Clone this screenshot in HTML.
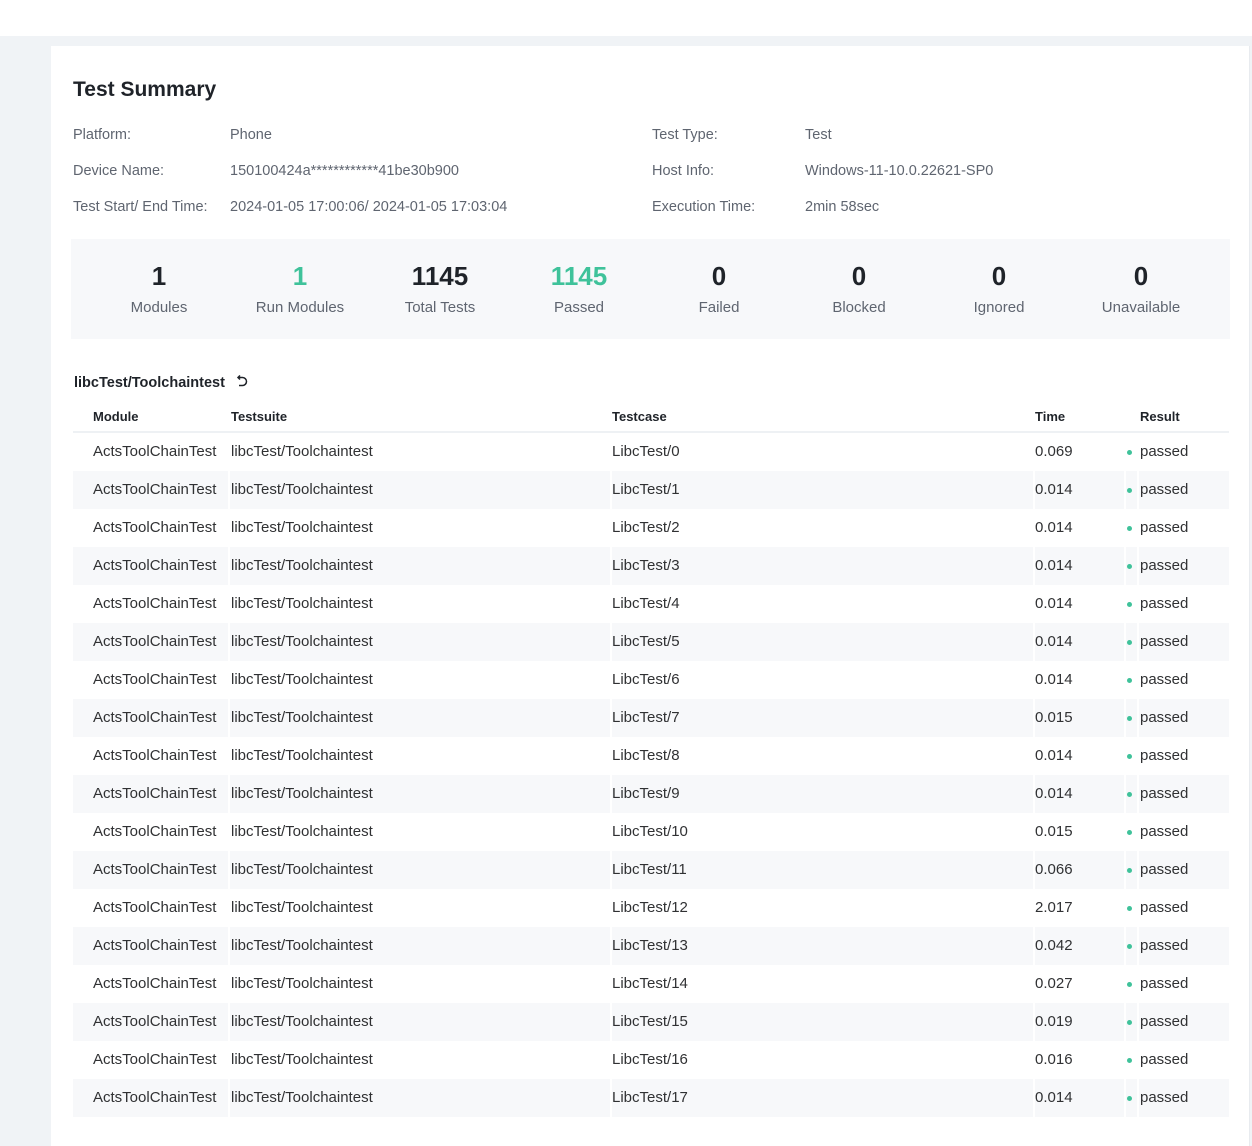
<!DOCTYPE html>
<html><head><meta charset="utf-8"><style>
*{margin:0;padding:0;box-sizing:border-box}
body{width:1252px;height:1099px;overflow:hidden;background:#f0f3f6;font-family:"Liberation Sans",sans-serif;position:relative;color:#303133}
.top{position:absolute;left:0;top:0;width:1252px;height:36px;background:#fff}
.card{position:absolute;left:51px;top:46px;width:1199px;height:1100px;background:#fff;border-right:1px solid #e8ebef}
.a{position:absolute;white-space:nowrap}
h1{position:absolute;left:73px;top:78px;font-size:21px;font-weight:bold;color:#1f2329}
.l{font-size:14.5px;color:#5f6570}
.stats{position:absolute;left:71px;top:239px;width:1159px;height:100px;background:#f7f8fa}
.s{position:absolute;width:140px;text-align:center}
.n{font-size:26px;font-weight:bold;color:#1f2329;position:absolute;top:22px;width:100%}
.g{color:#3fc29a}
.t{font-size:15px;color:#5f6570;position:absolute;top:60px;width:100%}
.row{position:absolute;left:73px;width:1156px;height:38px;font-size:15px;color:#303133}
.row.z{background:#f7f8fa}
.row div{position:absolute;top:10px}
.row .sep{top:0;height:38px;width:2px;background:#fff}
.dot{width:5px;height:5px;border-radius:50%;background:#3fc29a;top:17px!important}
.hd{font-size:13px;font-weight:bold;color:#1f2329}
</style></head><body>
<div class="top"></div>
<div class="card"></div>
<h1>Test Summary</h1>
<div class="a l" style="left:73px;top:127px">Platform:</div><div class="a l" style="left:230px;top:127px">Phone</div>
<div class="a l" style="left:73px;top:163px">Device Name:</div><div class="a l" style="left:230px;top:163px">150100424a************41be30b900</div>
<div class="a l" style="left:73px;top:199px">Test Start/ End Time:</div><div class="a l" style="left:230px;top:199px">2024-01-05 17:00:06/ 2024-01-05 17:03:04</div>
<div class="a l" style="left:652px;top:127px">Test Type:</div><div class="a l" style="left:805px;top:127px">Test</div>
<div class="a l" style="left:652px;top:163px">Host Info:</div><div class="a l" style="left:805px;top:163px">Windows-11-10.0.22621-SP0</div>
<div class="a l" style="left:652px;top:199px">Execution Time:</div><div class="a l" style="left:805px;top:199px">2min 58sec</div>
<div class="stats">
<div class="s" style="left:18px"><div class="n">1</div><div class="t">Modules</div></div>
<div class="s" style="left:159px"><div class="n g">1</div><div class="t">Run Modules</div></div>
<div class="s" style="left:299px"><div class="n">1145</div><div class="t">Total Tests</div></div>
<div class="s" style="left:438px"><div class="n g">1145</div><div class="t">Passed</div></div>
<div class="s" style="left:578px"><div class="n">0</div><div class="t">Failed</div></div>
<div class="s" style="left:718px"><div class="n">0</div><div class="t">Blocked</div></div>
<div class="s" style="left:858px"><div class="n">0</div><div class="t">Ignored</div></div>
<div class="s" style="left:1000px"><div class="n">0</div><div class="t">Unavailable</div></div>
</div>
<div class="a" style="left:74px;top:375px;font-size:14.5px;font-weight:bold;color:#1f2329">libcTest/Toolchaintest</div>
<svg class="a" style="left:235px;top:375px" width="14" height="14" viewBox="0 0 14 14"><path d="M3 2.5h4.5a4 4 0 0 1 0 8H4" fill="none" stroke="#1f2329" stroke-width="1.5"/><path d="M5 0.5 3 2.5 5 4.5" fill="none" stroke="#1f2329" stroke-width="1.5"/></svg>
<div class="row" style="top:399px;border-bottom:2px solid #eef1f4;height:34px">
<div class="hd" style="left:20px;top:10px">Module</div><div class="hd" style="left:158px;top:10px">Testsuite</div><div class="hd" style="left:539px;top:10px">Testcase</div><div class="hd" style="left:962px;top:10px">Time</div><div class="hd" style="left:1067px;top:10px">Result</div>
</div>
<div id="rows"></div>
<script>
var t=["0.069","0.014","0.014","0.014","0.014","0.014","0.014","0.015","0.014","0.014","0.015","0.066","2.017","0.042","0.027","0.019","0.016","0.014"],h="";
for(var i=0;i<18;i++){h+='<div class="row'+(i%2?' z':'')+'" style="top:'+(433+i*38)+'px"><div style="left:20px">ActsToolChainTest</div><div class="sep" style="left:155px"></div><div style="left:158px">libcTest/Toolchaintest</div><div class="sep" style="left:537px"></div><div style="left:539px">LibcTest/'+i+'</div><div class="sep" style="left:960px"></div><div style="left:962px">'+t[i]+'</div><div class="sep" style="left:1051px"></div><div class="dot" style="left:1054px"></div><div class="sep" style="left:1064px"></div><div style="left:1067px">passed</div></div>';}
document.getElementById("rows").innerHTML=h;
</script>
</body></html>
